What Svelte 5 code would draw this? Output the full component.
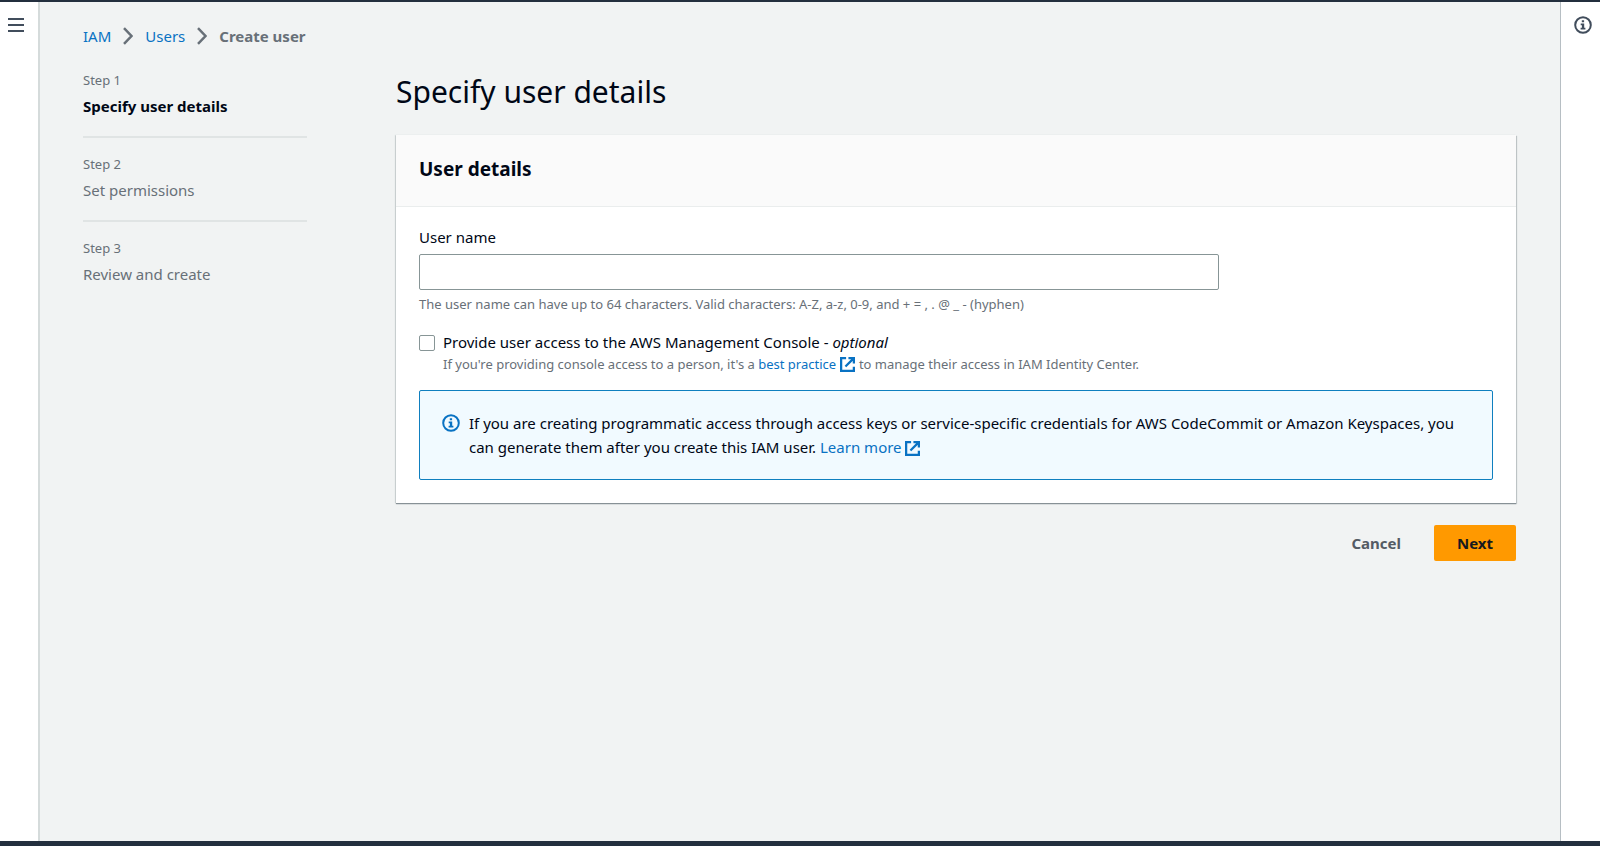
<script>
const steps = [
    "Specify user details",
    "Set permissions",
    "Review and create"
]

const current_step = 0

let user_name = $state("")
let console_access = $state(false)
</script>

{#snippet infoIcon()}
<svg class="icon info" viewBox="0 0 18 18" aria-hidden="true">
    <circle cx="9" cy="9" r="7.8" fill="none" stroke="currentColor" stroke-width="2" />
    <path d="M7.8 4.3h2.3v2H7.8zM6.7 7.4h3.5v4.3h1.2v1.9H6.6v-1.900h1.300V9.200H6.700z" fill="currentColor" />
</svg>
{/snippet}

{#snippet externalIcon()}
<svg class="icon external" viewBox="0 0 16 16" aria-hidden="true">
    <path d="M6.500 1.200H1.200v13.600h13.600V10.500M9 1.200h5.800V7M14.800 1.200L5.800 10.200" fill="none" stroke="currentColor" stroke-width="2.400" />
</svg>
{/snippet}

{#snippet chevron()}
<svg class="chevron" viewBox="0 0 10 18" aria-hidden="true">
    <path d="M1 1.200l7.500 7.800L1 16.800" fill="none" stroke="currentColor" stroke-width="2.500" />
</svg>
{/snippet}

<div class="page">
    <aside class="rail left">
        <button aria-label="Open navigation">
            <svg class="icon menu" viewBox="0 0 16 14" aria-hidden="true">
                <path d="M0 1h16M0 7h16M0 13h16" stroke="currentColor" stroke-width="2" />
            </svg>
        </button>
    </aside>

    <main>
        <nav class="breadcrumbs" aria-label="Breadcrumbs">
            <a href="#iam">IAM</a>
            {@render chevron()}
            <a href="#users">Users</a>
            {@render chevron()}
            <span>Create user</span>
        </nav>

        <div class="wizard">
            <ol class="steps">
                {#each steps as step, i}
                <li class:active={i === current_step}>
                    <small>Step {i + 1}</small>
                    <span>{step}</span>
                </li>
                {/each}
            </ol>

            <form onsubmit={(e) => e.preventDefault()}>
                <h1>Specify user details</h1>

                <section class="card">
                    <header>
                        <h2>User details</h2>
                    </header>

                    <div class="card-body">
                        <label class="field-label" for="user-name">User name</label>
                        <input id="user-name" type="text" aria-describedby="user-name-hint" bind:value={user_name} />
                        <p class="hint" id="user-name-hint">The user name can have up to 64 characters. Valid characters: A-Z, a-z, 0-9, and + = , . @ _ - (hyphen)</p>

                        <div class="check">
                            <input id="console-access" type="checkbox" bind:checked={console_access} />
                            <div>
                                <label for="console-access">Provide user access to the AWS Management Console - <em>optional</em></label>
                                <p class="hint">If you're providing console access to a person, it's a <a href="#best-practice">best practice {@render externalIcon()}</a> to manage their access in IAM Identity Center.</p>
                            </div>
                        </div>

                        <div class="alert">
                            {@render infoIcon()}
                            <p>If you are creating programmatic access through access keys or service-specific credentials for AWS CodeCommit or Amazon Keyspaces, you can generate them after you create this IAM user. <a href="#learn-more">Learn more {@render externalIcon()}</a></p>
                        </div>
                    </div>
                </section>

                <div class="actions">
                    <button class="cancel" type="button">Cancel</button>
                    <button class="next" type="submit">Next</button>
                </div>
            </form>
        </div>
    </main>

    <aside class="rail right">
        <button aria-label="Open help panel">
            {@render infoIcon()}
        </button>
    </aside>
</div>

<style>
:global(body) {
    margin: 0;
}

.page {
    display: flex;
    box-sizing: border-box;
    min-height: 100vh;
    border-top: 2px solid #232f3e;
    border-bottom: 5px solid #232f3e;
    background-color: #f1f3f3;
    color: #000716;
    font-family: "Noto Sans", "Open Sans", sans-serif;
    font-size: 15px;
    line-height: 24px;
}

.page * {
    box-sizing: border-box;
}

h1, h2, p, ol {
    margin: 0;
    padding: 0;
    list-style: none;
}

a {
    color: #0972c3;
    text-decoration: none;
}

button {
    border: none;
    background: none;
    padding: 0;
    font: inherit;
    cursor: pointer;
}

.icon {
    display: block;
    flex: none;
}

.info {
    width: 18px;
    height: 18px;
}

.menu {
    width: 16px;
    height: 14px;
}

.external {
    display: inline-block;
    width: 15px;
    height: 15px;
    vertical-align: -3px;
}

.rail {
    flex: none;
    width: 40px;
    background-color: #fff;
}

.rail button {
    display: flex;
    align-items: center;
    height: 45px;
    color: #414d5c;
}

.left {
    border-right: 2px solid #d5dbdb;
}

.left button {
    padding-left: 8px;
}

.right {
    border-left: 1px solid #b6bec3;
}

.right button {
    padding-left: 13px;
}

main {
    flex: 1;
    min-width: 0;
    padding: 22px 44px 40px 43px;
}

.breadcrumbs {
    display: flex;
    align-items: center;
    gap: 12px;
    color: #687078;
}

.breadcrumbs span {
    font-weight: 700;
}

.chevron {
    width: 10px;
    height: 18px;
}

.wizard {
    display: flex;
    gap: 89px;
    padding-top: 20px;
}

.steps {
    flex: none;
    width: 224px;
    color: #687078;
}

.steps li {
    display: flex;
    flex-direction: column;
    gap: 2px;
    height: 84px;
    border-bottom: 2px solid #e0e4e4;
}

.steps li:first-child {
    height: 70px;
}

.steps li + li {
    padding-top: 14px;
}

.steps li:last-child {
    border-bottom: none;
}

.steps small {
    font-size: 13px;
}

.steps .active span {
    color: #000716;
    font-weight: 700;
}

form {
    flex: 1;
    min-width: 0;
}

h1 {
    padding: 4px 0 23px;
    font-size: 30px;
    font-weight: 400;
    line-height: 40px;
}

.card {
    background-color: #fff;
    box-shadow: 0 1px 1px #879196, 1px 1px 1px #c8cecf, -1px 0 1px #d5dbdb;
}

.card header {
    padding: 22px 23px 25px;
    border-bottom: 1px solid #eaeded;
    background-color: #fafafa;
}

h2 {
    font-size: 19px;
    font-weight: 700;
    line-height: 24px;
}

.card-body {
    padding: 18px 23px 23px;
}

.field-label {
    display: block;
    padding-bottom: 5px;
}

input[type="text"] {
    display: block;
    width: 800px;
    max-width: 100%;
    height: 36px;
    padding: 0 12px;
    border: 1px solid #879596;
    border-radius: 2px;
    font: inherit;
}

.hint {
    color: #687078;
    font-size: 13px;
    line-height: 20px;
}

.hint a {
    margin-right: 1px;
}

.card-body > .hint {
    padding-top: 4px;
}

.check {
    display: flex;
    gap: 8px;
    padding: 16px 0;
}

input[type="checkbox"] {
    appearance: none;
    flex: none;
    width: 16px;
    height: 16px;
    margin: 5px 0 0;
    border: 1px solid #879596;
    border-radius: 2px;
    background-color: #fff;
}

input[type="checkbox"]:checked {
    background-color: #0972c3;
}

.alert {
    display: flex;
    gap: 9px;
    padding: 20px 22px;
    border: 1px solid #0f7fbf;
    border-radius: 2px;
    background-color: #f1faff;
}

.alert > :global(.info) {
    margin-top: 3px;
    color: #0972c3;
}

.actions {
    display: flex;
    justify-content: flex-end;
    gap: 10px;
    padding-top: 22px;
}

.actions button {
    height: 36px;
    padding: 0 23px;
    border-radius: 2px;
    font-weight: 700;
}

.cancel {
    color: #545b64;
}

.next {
    background-color: #ff9900;
    color: #16191f;
}
</style>
